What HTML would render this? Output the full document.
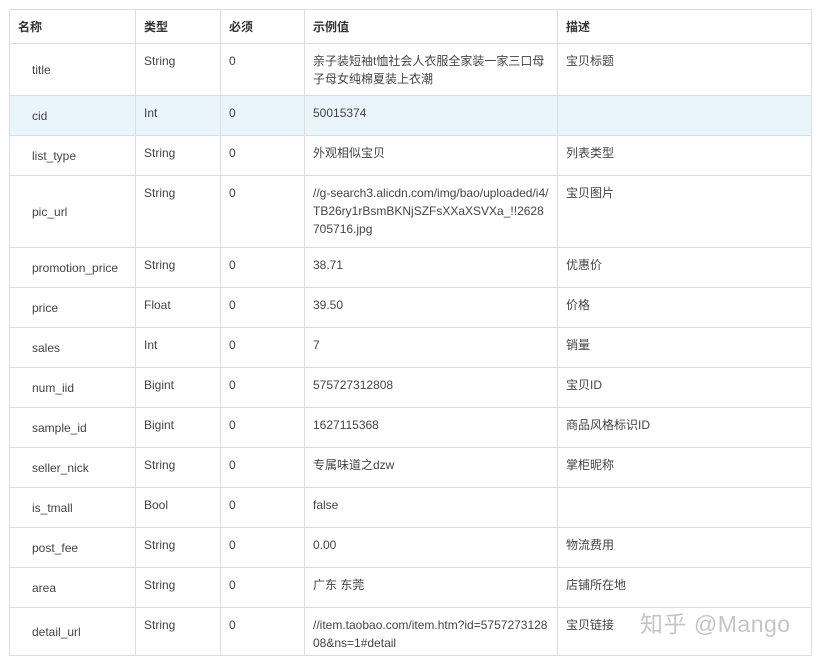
<!DOCTYPE html>
<html><head><meta charset="utf-8"><style>
body{margin:0;background:#fff;width:819px;height:659px;overflow:hidden;font-family:"Liberation Sans","Noto Sans CJK SC",sans-serif;font-size:12px;color:#444;position:relative}
table{position:absolute;left:9px;top:9px;border-collapse:collapse;table-layout:fixed;width:802px}
td,th{border:1px solid #ddd;padding:0 8px;vertical-align:top;line-height:18px;text-align:left}
th{height:33px;vertical-align:middle;font-weight:bold;font-size:12px;color:#333}
td{padding-top:8px}
td.n{vertical-align:middle;padding:0 0 0 22px;padding-top:0}
tr.hl td{background:#eaf4fb}
.wm{position:absolute;left:640px;top:605px;font-size:23px;color:rgba(150,150,150,.55);letter-spacing:0.5px}
</style></head><body>
<table>
<colgroup><col style="width:126px"><col style="width:85px"><col style="width:84px"><col style="width:253px"><col style="width:254px"></colgroup>
<tr><th>名称</th><th>类型</th><th>必须</th><th>示例值</th><th>描述</th></tr>
<tr style="height:52px"><td class="n">title</td><td>String</td><td>0</td><td>亲子装短袖t恤社会人衣服全家装一家三口母子母女纯棉夏装上衣潮</td><td>宝贝标题</td></tr>
<tr class="hl" style="height:40px"><td class="n">cid</td><td>Int</td><td>0</td><td>50015374</td><td></td></tr>
<tr style="height:40px"><td class="n">list_type</td><td>String</td><td>0</td><td>外观相似宝贝</td><td>列表类型</td></tr>
<tr style="height:72px"><td class="n">pic_url</td><td>String</td><td>0</td><td style="word-break:break-all">//g-search3.alicdn.com/img/bao/uploaded/i4/TB26ry1rBsmBKNjSZFsXXaXSVXa_!!2628705716.jpg</td><td>宝贝图片</td></tr>
<tr style="height:40px"><td class="n">promotion_price</td><td>String</td><td>0</td><td>38.71</td><td>优惠价</td></tr>
<tr style="height:40px"><td class="n">price</td><td>Float</td><td>0</td><td>39.50</td><td>价格</td></tr>
<tr style="height:40px"><td class="n">sales</td><td>Int</td><td>0</td><td>7</td><td>销量</td></tr>
<tr style="height:40px"><td class="n">num_iid</td><td>Bigint</td><td>0</td><td>575727312808</td><td>宝贝ID</td></tr>
<tr style="height:40px"><td class="n">sample_id</td><td>Bigint</td><td>0</td><td>1627115368</td><td>商品风格标识ID</td></tr>
<tr style="height:40px"><td class="n">seller_nick</td><td>String</td><td>0</td><td>专属味道之dzw</td><td>掌柜昵称</td></tr>
<tr style="height:40px"><td class="n">is_tmall</td><td>Bool</td><td>0</td><td>false</td><td></td></tr>
<tr style="height:40px"><td class="n">post_fee</td><td>String</td><td>0</td><td>0.00</td><td>物流费用</td></tr>
<tr style="height:40px"><td class="n">area</td><td>String</td><td>0</td><td>广东 东莞</td><td>店铺所在地</td></tr>
<tr style="height:48px"><td class="n">detail_url</td><td>String</td><td>0</td><td style="word-break:break-all">//item.taobao.com/item.htm?id=575727312808&amp;ns=1#detail</td><td>宝贝链接</td></tr>
</table>
<div class="wm">知乎 @Mango</div>
</body></html>
